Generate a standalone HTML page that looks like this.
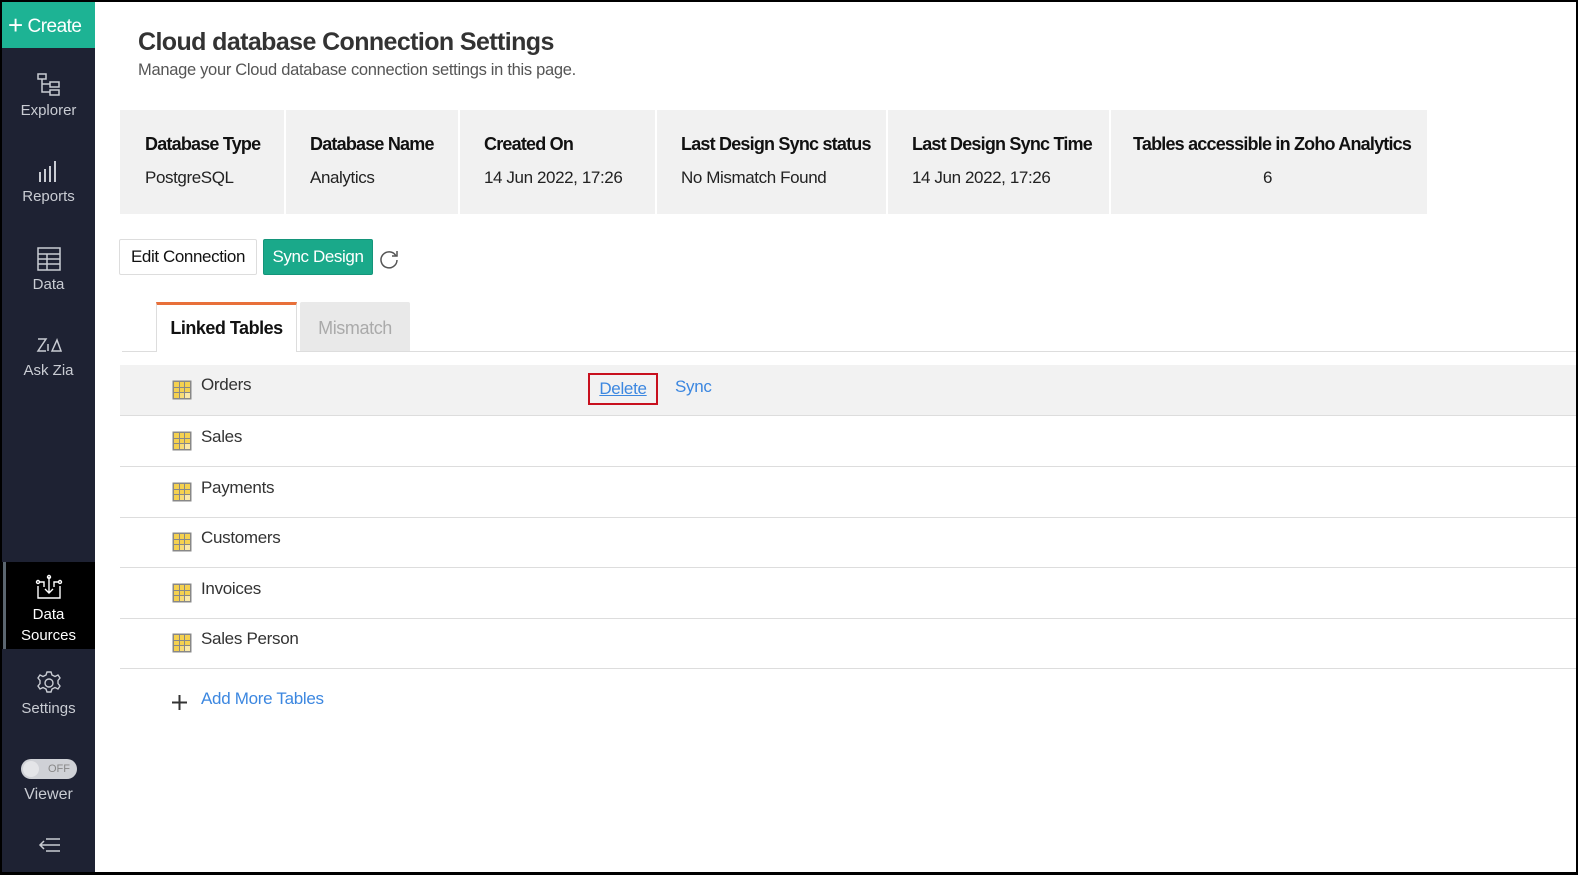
<!DOCTYPE html>
<html><head><meta charset="utf-8"><style>
*{margin:0;padding:0;box-sizing:border-box}
body{width:1578px;height:875px;background:#000;font-family:"Liberation Sans",sans-serif;position:relative;overflow:hidden}
.main{position:absolute;left:2px;top:2px;width:1574px;height:870px;background:#fff}
.a{position:absolute;white-space:nowrap}
.sb{position:absolute;left:2px;top:2px;width:93px;height:870px;background:#1e2233}
.nav{position:absolute;left:0;width:93px;text-align:center;color:#c9ccd3;font-size:15px}
.nav svg{display:block;margin:0 auto 4px}
.cell{position:absolute;top:110px;height:104px;background:#f1f1f1}
.cell b{position:absolute;top:24px;font-size:18px;color:#111;letter-spacing:-0.8px;white-space:nowrap}
.cell span{position:absolute;top:58px;font-size:17px;color:#222;letter-spacing:-0.4px;white-space:nowrap}
.row{position:absolute;left:120px;width:1456px;height:51px;border-bottom:1px solid #ddd}
.row .ic{position:absolute;left:52px;top:15px}
.row .t{position:absolute;left:81px;top:11px;font-size:17px;color:#333;letter-spacing:-0.3px}
</style></head><body>
<div class="main"></div>
<div class="sb">
  <div class="a" style="left:0;top:0;width:93px;height:46px;background:#1db394;color:#fff;font-size:19px;line-height:46px;padding-left:6px;letter-spacing:-0.5px"><span style="font-size:26px;vertical-align:-2px">+</span> Create</div>
  <div class="nav" style="top:70px"><svg width="26" height="26" viewBox="0 0 26 26" fill="none" stroke="#c9ccd3" stroke-width="1.5"><rect x="2" y="2" width="8" height="5"/><rect x="14" y="10" width="9" height="5"/><rect x="14" y="18" width="9" height="5"/><path d="M6 7v13h8M6 12h8"/></svg>Explorer</div>
  <div class="nav" style="top:156px"><svg width="26" height="26" viewBox="0 0 26 26" stroke="#c9ccd3" stroke-width="2"><path d="M4 14v10M9 11v13M14 8v16M19 3v21"/></svg>Reports</div>
  <div class="nav" style="top:244px"><svg width="26" height="26" viewBox="0 0 26 26" fill="none" stroke="#c9ccd3" stroke-width="1.5"><rect x="2" y="2" width="22" height="22"/><path d="M2 8h22M2 13h22M2 18h22M11 8v16"/></svg>Data</div>
  <div class="nav" style="top:332px"><svg width="28" height="24" viewBox="0 0 28 24" fill="none" stroke="#c9ccd3" stroke-width="1.5"><path d="M3 5h8L3 17h8M13 10v7M17 17l5-11 4 11z"/></svg>Ask Zia</div>
  <div class="a" style="left:0;top:560px;width:93px;height:87px;background:#000"></div>
  <div class="a" style="left:1px;top:560px;width:3px;height:87px;background:#5b6670"></div>
  <div class="nav" style="top:572px;color:#fff"><svg width="28" height="26" viewBox="0 0 28 26" fill="none" stroke="#fff" stroke-width="1.4"><path d="M3 12v12h22V12M14 3v16M10 15l4 4 4-4M4 8h5v5M24 8h-5v5"/><circle cx="14" cy="3" r="1.5"/><circle cx="3" cy="8" r="1.5"/><circle cx="25" cy="8" r="1.5"/></svg><div style="line-height:21px">Data<br>Sources</div></div>
  <div class="nav" style="top:668px"><svg width="26" height="26" viewBox="0 0 26 26" fill="none" stroke="#c9ccd3" stroke-width="1.4"><circle cx="13" cy="13" r="4"/><path d="M11 2h4l1 3 3 1.5 3-1.5 2 3-2 2.5v3l2 2.5-2 3-3-1.5-3 1.5-1 3h-4l-1-3-3-1.5-3 1.5-2-3 2-2.5v-3l-2-2.5 2-3 3 1.5 3-1.5z"/></svg>Settings</div>
  <div class="a" style="left:19px;top:757px;width:56px;height:20px;border-radius:10px;background:#cfd1d6"><div style="position:absolute;left:2px;top:2px;width:16px;height:16px;border-radius:8px;background:#e4e5e8"></div><span style="position:absolute;left:27px;top:4px;font-size:11px;color:#888">OFF</span></div>
  <div class="nav" style="top:784px;font-size:16px">Viewer</div>
  <div class="a" style="left:36px;top:834px"><svg width="24" height="18" viewBox="0 0 24 18" fill="none" stroke="#c9ccd3" stroke-width="1.5"><path d="M8 3h14M2 9h20M8 15h14M6 5L2 9l4 4"/></svg></div>
</div>
<div class="a" style="left:138px;top:28px;font-size:25px;font-weight:bold;color:#333;letter-spacing:-0.6px">Cloud database Connection Settings</div>
<div class="a" style="left:138px;top:61px;font-size:16.5px;color:#555;letter-spacing:-0.3px">Manage your Cloud database connection settings in this page.</div>

<div class="cell" style="left:120px;width:164px"><b style="left:25px">Database Type</b><span style="left:25px">PostgreSQL</span></div>
<div class="cell" style="left:286px;width:172px"><b style="left:24px">Database Name</b><span style="left:24px">Analytics</span></div>
<div class="cell" style="left:460px;width:195px"><b style="left:24px">Created On</b><span style="left:24px">14 Jun 2022, 17:26</span></div>
<div class="cell" style="left:657px;width:229px"><b style="left:24px">Last Design Sync status</b><span style="left:24px">No Mismatch Found</span></div>
<div class="cell" style="left:888px;width:221px"><b style="left:24px">Last Design Sync Time</b><span style="left:24px">14 Jun 2022, 17:26</span></div>
<div class="cell" style="left:1111px;width:316px"><b style="left:22px">Tables accessible in Zoho Analytics</b><span style="left:152px">6</span></div>

<div class="a" style="left:119px;top:239px;width:138px;height:36px;border:1px solid #ddd;border-radius:2px;font-size:17px;color:#111;line-height:34px;text-align:center;letter-spacing:-0.4px">Edit Connection</div>
<div class="a" style="left:263px;top:239px;width:110px;height:36px;background:#1aa98a;border:1px solid #14957a;border-radius:2px;font-size:17px;color:#fff;line-height:34px;text-align:center;letter-spacing:-0.4px">Sync Design</div>
<div class="a" style="left:378px;top:248px"><svg width="22" height="22" viewBox="0 0 22 22" fill="none" stroke="#555" stroke-width="1.5"><path d="M18 8A8 8 0 1 0 19 12"/><path d="M19 3v5h-5" /></svg></div>

<div class="a" style="left:122px;top:351px;width:1454px;height:1px;background:#ddd"></div>
<div class="a" style="left:156px;top:302px;width:141px;height:50px;background:#fff;border-top:3px solid #e8703a;border-left:1px solid #ddd;border-right:1px solid #ddd;font-size:18px;font-weight:bold;color:#111;text-align:center;line-height:47px;letter-spacing:-0.5px">Linked Tables</div>
<div class="a" style="left:300px;top:302px;width:110px;height:49px;background:#e9e9e9;border-radius:2px 2px 0 0;font-size:18px;color:#aaa;text-align:center;line-height:52px;letter-spacing:-0.4px">Mismatch</div>

<div class="row" style="top:365px;background:#f2f2f2"><svg class="ic" width="20" height="20"><rect x=".5" y=".5" width="19" height="19" fill="#888"/><g fill="#f5d14f"><rect x="2" y="2" width="5" height="5"/><rect x="8" y="2" width="4" height="5"/><rect x="13" y="2" width="5" height="5"/><rect x="2" y="8" width="5" height="4"/><rect x="8" y="8" width="4" height="4"/><rect x="13" y="8" width="5" height="4"/><rect x="2" y="13" width="5" height="5"/><rect x="8" y="13" width="4" height="5" fill="#f8dc76"/><rect x="13" y="13" width="5" height="5" fill="#fbe9a6"/></g></svg><div class="t" style="top:10px">Orders</div>
<div class="a" style="left:468px;top:8px;width:70px;height:32px;border:2px solid #c8101e;font-size:17px;color:#3c87e0;text-decoration:underline;text-align:center;line-height:28px;letter-spacing:-0.3px">Delete</div>
<div class="a" style="left:555px;top:12px;font-size:17px;color:#3c87e0;letter-spacing:-0.3px">Sync</div></div>
<div class="row" style="top:416px"><svg class="ic" width="20" height="20"><rect x=".5" y=".5" width="19" height="19" fill="#888"/><g fill="#f5d14f"><rect x="2" y="2" width="5" height="5"/><rect x="8" y="2" width="4" height="5"/><rect x="13" y="2" width="5" height="5"/><rect x="2" y="8" width="5" height="4"/><rect x="8" y="8" width="4" height="4"/><rect x="13" y="8" width="5" height="4"/><rect x="2" y="13" width="5" height="5"/><rect x="8" y="13" width="4" height="5" fill="#f8dc76"/><rect x="13" y="13" width="5" height="5" fill="#fbe9a6"/></g></svg><div class="t">Sales</div></div>
<div class="row" style="top:467px"><svg class="ic" width="20" height="20"><rect x=".5" y=".5" width="19" height="19" fill="#888"/><g fill="#f5d14f"><rect x="2" y="2" width="5" height="5"/><rect x="8" y="2" width="4" height="5"/><rect x="13" y="2" width="5" height="5"/><rect x="2" y="8" width="5" height="4"/><rect x="8" y="8" width="4" height="4"/><rect x="13" y="8" width="5" height="4"/><rect x="2" y="13" width="5" height="5"/><rect x="8" y="13" width="4" height="5" fill="#f8dc76"/><rect x="13" y="13" width="5" height="5" fill="#fbe9a6"/></g></svg><div class="t">Payments</div></div>
<div class="row" style="top:517px"><svg class="ic" width="20" height="20"><rect x=".5" y=".5" width="19" height="19" fill="#888"/><g fill="#f5d14f"><rect x="2" y="2" width="5" height="5"/><rect x="8" y="2" width="4" height="5"/><rect x="13" y="2" width="5" height="5"/><rect x="2" y="8" width="5" height="4"/><rect x="8" y="8" width="4" height="4"/><rect x="13" y="8" width="5" height="4"/><rect x="2" y="13" width="5" height="5"/><rect x="8" y="13" width="4" height="5" fill="#f8dc76"/><rect x="13" y="13" width="5" height="5" fill="#fbe9a6"/></g></svg><div class="t">Customers</div></div>
<div class="row" style="top:568px"><svg class="ic" width="20" height="20"><rect x=".5" y=".5" width="19" height="19" fill="#888"/><g fill="#f5d14f"><rect x="2" y="2" width="5" height="5"/><rect x="8" y="2" width="4" height="5"/><rect x="13" y="2" width="5" height="5"/><rect x="2" y="8" width="5" height="4"/><rect x="8" y="8" width="4" height="4"/><rect x="13" y="8" width="5" height="4"/><rect x="2" y="13" width="5" height="5"/><rect x="8" y="13" width="4" height="5" fill="#f8dc76"/><rect x="13" y="13" width="5" height="5" fill="#fbe9a6"/></g></svg><div class="t">Invoices</div></div>
<div class="row" style="top:618px"><svg class="ic" width="20" height="20"><rect x=".5" y=".5" width="19" height="19" fill="#888"/><g fill="#f5d14f"><rect x="2" y="2" width="5" height="5"/><rect x="8" y="2" width="4" height="5"/><rect x="13" y="2" width="5" height="5"/><rect x="2" y="8" width="5" height="4"/><rect x="8" y="8" width="4" height="4"/><rect x="13" y="8" width="5" height="4"/><rect x="2" y="13" width="5" height="5"/><rect x="8" y="13" width="4" height="5" fill="#f8dc76"/><rect x="13" y="13" width="5" height="5" fill="#fbe9a6"/></g></svg><div class="t">Sales Person</div></div>

<div class="a" style="left:171px;top:694px"><svg width="17" height="17" stroke="#333" stroke-width="2"><path d="M8.5 1v15M1 8.5h15"/></svg></div>
<div class="a" style="left:201px;top:689px;font-size:17px;color:#3c87e0;letter-spacing:-0.3px">Add More Tables</div>
</body></html>
